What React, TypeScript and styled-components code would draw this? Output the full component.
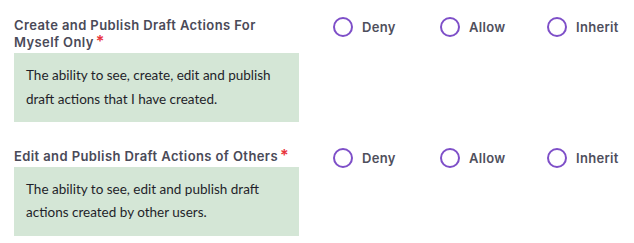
import React from "react";
import styled, { createGlobalStyle } from "styled-components";

const GlobalStyle = createGlobalStyle`
    body {
        margin: 0;
        background: #ffffff;
        font-family: Inter, "Liberation Sans", sans-serif;
    }
`;

const Page = styled.div`
    display: flex;
    flex-direction: column;
    gap: 25.5px;
    padding: 16.5px 14px;
`;

const PermissionRow = styled.div`
    display: flex;
    align-items: flex-start;
    gap: 34px;
`;

const InfoColumn = styled.div`
    width: 285px;
    flex-shrink: 0;
    display: flex;
    flex-direction: column;
    gap: 1.5px;
`;

const Title = styled.div`
    font-size: 13px;
    font-weight: 600;
    line-height: 17.5px;
    letter-spacing: 0.4px;
    color: #4a4a58;
`;

const Required = styled.span`
    color: #e8343c;
    font-size: 16px;
    line-height: 0;
    margin-left: 2px;
`;

const Description = styled.div`
    background: #d4e6d6;
    padding: 11px 12px;
    font-family: Lato, "Liberation Sans", sans-serif;
    font-size: 13.5px;
    line-height: 23.5px;
    color: #1f1f2a;
`;

const RadioGroup = styled.div`
    display: grid;
    grid-template-columns: 107px 107px auto;
    align-items: center;
    height: 17.5px;
`;

const Option = styled.label`
    display: flex;
    align-items: center;
    gap: 9px;
    font-size: 13px;
    font-weight: 600;
    letter-spacing: 0.3px;
    color: #4f4f5c;
    cursor: pointer;
`;

const Circle = styled.span<{ checked: boolean }>`
    box-sizing: border-box;
    width: 20px;
    height: 20px;
    border-radius: 50%;
    border: 2px solid #7e4fc8;
    background: ${({ checked }) => (checked ? "radial-gradient(circle, #7e4fc8 0 4px, transparent 5px)" : "transparent")};
    flex-shrink: 0;
`;

type Permission = {
    title: string;
    description: string;
};

const permissions: Permission[] = [
    {
        title: "Create and Publish Draft Actions For Myself Only",
        description: "The ability to see, create, edit and publish draft actions that I have created.",
    },
    {
        title: "Edit and Publish Draft Actions of Others",
        description: "The ability to see, edit and publish draft actions created by other users.",
    },
];

const choices = ["Deny", "Allow", "Inherit"];

const App: React.FC = () => {
    const [values, setValues] = React.useState<string[]>(["", ""]);

    return (
        <>
            <GlobalStyle />
            <Page>
                {permissions.map((p, i) => (
                    <PermissionRow key={p.title}>
                        <InfoColumn>
                            <Title>
                                {p.title}
                                <Required>*</Required>
                            </Title>
                            <Description>{p.description}</Description>
                        </InfoColumn>
                        <RadioGroup>
                            {choices.map((c) => (
                                <Option
                                    key={c}
                                    onClick={() => setValues((v) => v.map((x, j) => (j === i ? c : x)))}
                                >
                                    <Circle checked={values[i] === c} />
                                    {c}
                                </Option>
                            ))}
                        </RadioGroup>
                    </PermissionRow>
                ))}
            </Page>
        </>
    );
};

export default App;
